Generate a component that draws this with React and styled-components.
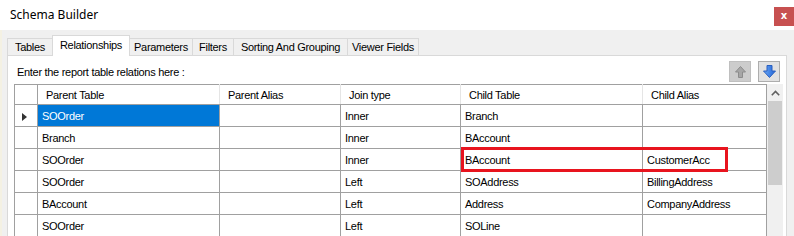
import React from "react";
import styled, { createGlobalStyle } from "styled-components";

const GlobalStyle = createGlobalStyle`
  html, body {
    margin: 0;
    padding: 0;
    background: #f0f0f0;
  }
  body {
    font-family: "Liberation Sans", Arial, sans-serif;
  }
`;

const tabs = [
  { label: "Tables", width: 46 },
  { label: "Relationships", width: 78, active: true },
  { label: "Parameters", width: 64 },
  { label: "Filters", width: 42 },
  { label: "Sorting And Grouping", width: 115 },
  { label: "Viewer Fields", width: 72 },
];

const columns = [
  { key: "parent", label: "Parent Table", width: 182 },
  { key: "parentAlias", label: "Parent Alias", width: 121 },
  { key: "join", label: "Join type", width: 120 },
  { key: "child", label: "Child Table", width: 182 },
  { key: "childAlias", label: "Child Alias", width: 124 },
];

const rows = [
  { parent: "SOOrder", parentAlias: "", join: "Inner", child: "Branch", childAlias: "", current: true },
  { parent: "Branch", parentAlias: "", join: "Inner", child: "BAccount", childAlias: "" },
  { parent: "SOOrder", parentAlias: "", join: "Inner", child: "BAccount", childAlias: "CustomerAcc" },
  { parent: "SOOrder", parentAlias: "", join: "Left", child: "SOAddress", childAlias: "BillingAddress" },
  { parent: "BAccount", parentAlias: "", join: "Left", child: "Address", childAlias: "CompanyAddress" },
  { parent: "SOOrder", parentAlias: "", join: "Left", child: "SOLine", childAlias: "" },
];

const UpArrow = ({ color, stroke }) => (
  <svg width="11" height="12" viewBox="0 0 11 12">
    <path d="M5.5 0.5 L10.5 6 L7.5 6 L7.5 11.5 L3.5 11.5 L3.5 6 L0.5 6 Z" fill={color} stroke={stroke} strokeWidth="1" />
  </svg>
);

const DownArrow = () => (
  <svg width="13" height="13" viewBox="0 0 13 13">
    <defs>
      <linearGradient id="dn" x1="0" y1="0" x2="1" y2="0">
        <stop offset="0" stopColor="#6aa8f5" />
        <stop offset="1" stopColor="#1f62d6" />
      </linearGradient>
    </defs>
    <path d="M4 0.5 L9 0.5 L9 6 L12.5 6 L6.5 12.5 L0.5 6 L4 6 Z" fill="url(#dn)" stroke="#2a5fbf" strokeWidth="1" />
  </svg>
);

const App = () => {
  return (
    <Window>
      <GlobalStyle />
      <TitleBar>
        <Title>Schema Builder</Title>
        <CloseButton>x</CloseButton>
      </TitleBar>
      <Body>
        <TabStrip>
          {tabs.map((t) => (
            <Tab key={t.label} $active={t.active} $width={t.width}>
              {t.label}
            </Tab>
          ))}
        </TabStrip>
        <Panel>
          <Toolbar>
            <Hint>Enter the report table relations here :</Hint>
            <ToolButtons>
              <ToolButton $disabled>
                <UpArrow color="#a6a6a6" stroke="#8c8c8c" />
              </ToolButton>
              <ToolButton>
                <DownArrow />
              </ToolButton>
            </ToolButtons>
          </Toolbar>
          <GridArea>
            <GridWrap>
              <Grid>
                <colgroup>
                  <col style={{ width: 23 }} />
                  {columns.map((c) => (
                    <col key={c.key} style={{ width: c.width }} />
                  ))}
                </colgroup>
                <thead>
                  <HeadRow>
                    <HeadCell />
                    {columns.map((c) => (
                      <HeadCell key={c.key}>{c.label}</HeadCell>
                    ))}
                  </HeadRow>
                </thead>
                <tbody>
                  {rows.map((r, i) => (
                    <Row key={i}>
                      <IndicatorCell>{r.current && <Pointer />}</IndicatorCell>
                      {columns.map((c, ci) => (
                        <Cell key={c.key} $selected={r.current && ci === 0}>
                          {r[c.key]}
                        </Cell>
                      ))}
                    </Row>
                  ))}
                </tbody>
              </Grid>
              <Highlight />
            </GridWrap>
            <ScrollBar>
              <ScrollArrow>
                <svg width="9" height="6" viewBox="0 0 9 6">
                  <path d="M0.8 5.2 L4.5 1.5 L8.2 5.2" fill="none" stroke="#606060" strokeWidth="1.6" />
                </svg>
              </ScrollArrow>
              <Thumb />
            </ScrollBar>
          </GridArea>
        </Panel>
      </Body>
    </Window>
  );
};

const Window = styled.div`
  width: 794px;
  height: 236px;
  overflow: hidden;
  display: flex;
  flex-direction: column;
  background: #f0f0f0;
`;

const TitleBar = styled.div`
  height: 30px;
  flex: none;
  display: flex;
  align-items: flex-start;
  justify-content: space-between;
  background: #ffffff;
`;

const Title = styled.div`
  padding: 7px 0 0 10px;
  font-family: "Noto Sans", "Open Sans", sans-serif;
  font-size: 12px;
  line-height: 16px;
  color: #000000;
`;

const CloseButton = styled.div`
  margin-top: 7px;
  width: 20px;
  height: 19px;
  background: #c75050;
  color: #ffffff;
  font-family: "DejaVu Sans", sans-serif;
  font-weight: bold;
  font-size: 10px;
  line-height: 18px;
  text-align: center;
`;

const Body = styled.div`
  flex: 1;
  display: flex;
  flex-direction: column;
  padding: 5px 7px 0 7px;
  border-left: 2px solid #f4f1e3;
  margin-left: 0;
  box-sizing: border-box;
  min-height: 0;
`;

const TabStrip = styled.div`
  display: flex;
  align-items: flex-end;
  height: 21px;
  position: relative;
  z-index: 1;
  margin-bottom: -1px;
  margin-left: -2px;
`;

const Tab = styled.div`
  width: ${(p) => p.$width}px;
  height: ${(p) => (p.$active ? 21 : 18)}px;
  box-sizing: border-box;
  margin-left: -1px;
  border: 1px solid #d9d9d9;
  border-bottom: ${(p) => (p.$active ? "none" : "1px solid #d9d9d9")};
  background: ${(p) => (p.$active ? "#ffffff" : "#f0f0f0")};
  font-size: 11px;
  letter-spacing: -0.3px;
  color: #000000;
  text-align: center;
  line-height: ${(p) => (p.$active ? 18 : 16)}px;
  white-space: nowrap;
  &:first-child {
    margin-left: 0;
  }
`;

const Panel = styled.div`
  flex: 1;
  margin-left: -2px;
  background: #ffffff;
  border: 1px solid #d9d9d9;
  border-bottom: none;
  padding: 5px 3px 0 6px;
  display: flex;
  flex-direction: column;
  gap: 2px;
  min-height: 0;
`;

const Toolbar = styled.div`
  display: flex;
  align-items: center;
  justify-content: space-between;
  height: 21px;
`;

const Hint = styled.div`
  padding-left: 3px;
  font-size: 11px;
  letter-spacing: -0.3px;
  color: #000000;
`;

const ToolButtons = styled.div`
  display: flex;
  gap: 7px;
  margin-right: 3px;
`;

const ToolButton = styled.div`
  width: 22px;
  height: 21px;
  box-sizing: border-box;
  display: flex;
  align-items: center;
  justify-content: center;
  background: ${(p) => (p.$disabled ? "#cccccc" : "#e1e1e1")};
  border: 1px solid ${(p) => (p.$disabled ? "#bfbfbf" : "#adadad")};
`;

const GridArea = styled.div`
  display: flex;
  align-items: stretch;
  gap: 1px;
  flex: 1;
  min-height: 0;
`;

const GridWrap = styled.div`
  position: relative;
  width: 752px;
  flex: none;
`;

const Grid = styled.table`
  width: 752px;
  table-layout: fixed;
  border-collapse: collapse;
  font-size: 11px;
  letter-spacing: -0.3px;
  color: #000000;
  background: #ffffff;
`;

const HeadRow = styled.tr`
  height: 20px;
`;

const HeadCell = styled.th`
  padding: 0 0 0 8px;
  text-align: left;
  font-weight: normal;
  white-space: nowrap;
  border-top: 1px solid #a0a0a0;
  border-bottom: 1px solid #a0a0a0;
  border-right: 1px solid #e5e5e5;
  &:first-child {
    border-left: 1px solid #a0a0a0;
    border-right: 1px solid #a0a0a0;
  }
  &:last-child {
    border-right: 1px solid #a0a0a0;
  }
`;

const Row = styled.tr`
  height: 22px;
`;

const IndicatorCell = styled.td`
  padding: 0;
  border: 1px solid #a0a0a0;
  text-align: center;
  vertical-align: middle;
`;

const Pointer = styled.span`
  display: inline-block;
  width: 0;
  height: 0;
  margin-left: -4px;
  border-top: 4px solid transparent;
  border-bottom: 4px solid transparent;
  border-left: 5px solid #333333;
  vertical-align: middle;
`;

const Cell = styled.td`
  padding: 0 0 0 4px;
  border: 1px solid #a0a0a0;
  white-space: nowrap;
  overflow: hidden;
  background: ${(p) => (p.$selected ? "#0078d7" : "#ffffff")};
  color: ${(p) => (p.$selected ? "#ffffff" : "#000000")};
`;

const Highlight = styled.div`
  position: absolute;
  left: 447px;
  top: 63px;
  width: 267px;
  height: 25px;
  box-sizing: border-box;
  border: 3px solid #e8141e;
  pointer-events: none;
`;

const ScrollBar = styled.div`
  width: 16px;
  flex: none;
  background: #f0f0f0;
  display: flex;
  flex-direction: column;
  align-items: center;
`;

const ScrollArrow = styled.div`
  height: 17px;
  width: 16px;
  display: flex;
  align-items: center;
  justify-content: center;
`;

const Thumb = styled.div`
  width: 14px;
  height: 84px;
  background: #cdcdcd;
`;

export default App;
